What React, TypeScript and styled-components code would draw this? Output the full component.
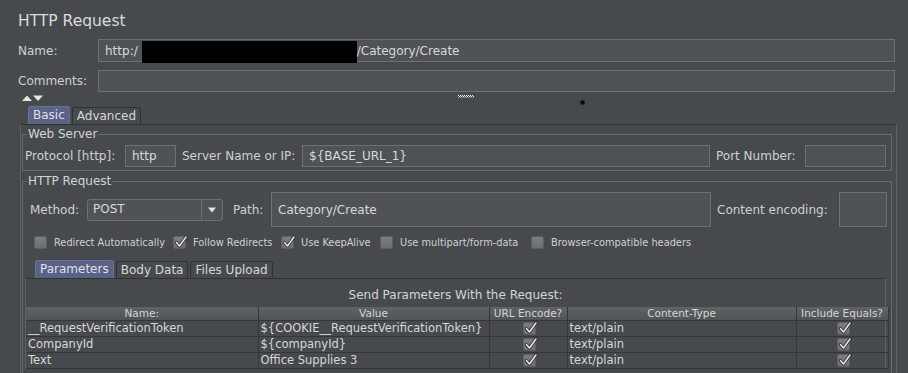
import React from 'react';
import styled, { createGlobalStyle } from 'styled-components';

const GlobalStyle = createGlobalStyle`
  html, body { margin: 0; padding: 0; background: #464a4d; }
  body { font-family: "DejaVu Sans", "Liberation Sans", sans-serif; }
  * { box-sizing: border-box; }
`;

const Page = styled.div`
  width: 908px;
  height: 373px;
  overflow: hidden;
  padding: 11px 11px 0 18px;
  background: #464a4d;
  color: #d3d4d5;
  display: flex;
  flex-direction: column;
`;

const Title = styled.h1`
  margin: 0;
  height: 20px;
  font-size: 15.5px;
  line-height: 20px;
  font-weight: normal;
  color: #dadbdc;
`;

const TopRow = styled.div<{ $top: number; $h: number }>`
  display: flex;
  align-items: center;
  margin-top: ${p => p.$top}px;
  height: ${p => p.$h}px;
`;

const TopLabel = styled.span`
  width: 80px;
  font-size: 12px;
  color: #cfd0d1;
  white-space: nowrap;
`;

const TextBox = styled.div<{ $w?: number; $h?: number }>`
  ${p => (p.$w ? `width: ${p.$w}px; flex: none;` : 'flex: 1;')}
  height: ${p => p.$h ?? 22}px;
  border: 1px solid #6c7072;
  background: #4f5356;
  padding: 0 6px;
  font-size: 12px;
  color: #d8d9da;
  display: flex;
  align-items: center;
  white-space: nowrap;
  overflow: hidden;
`;

const WideBox = styled(TextBox)`
  margin-right: 2px;
  overflow: visible;
`;

const Redacted = styled.span`
  display: inline-block;
  width: 215px;
  height: 22px;
  margin: 2px 0 0 4px;
  background: #000;
`;

const SplitRow = styled.div`
  display: flex;
  align-items: flex-start;
  height: 14px;
`;

const Mark = styled.div<{ $left: number; $top: number }>`
  margin-left: ${p => p.$left}px;
  margin-top: ${p => p.$top}px;
  display: flex;
`;

const TabStrip = styled.div<{ $left: number }>`
  display: flex;
  align-items: flex-end;
  gap: 2px;
  height: 18px;
  margin-left: ${p => p.$left}px;
`;

const Tab = styled.div<{ $active?: boolean }>`
  height: ${p => (p.$active ? 18 : 17)}px;
  padding: 0 4px;
  font-size: 12px;
  line-height: ${p => (p.$active ? 16 : 17)}px;
  border: 1px solid ${p => (p.$active ? '#6a7296' : '#2f3234')};
  border-bottom: none;
  border-radius: 3px 3px 0 0;
  background: ${p => (p.$active ? '#5a6286' : '#484b4e')};
  color: ${p => (p.$active ? '#dfe1ea' : '#d6d7d8')};
  white-space: nowrap;
`;

const OuterPanel = styled.div`
  flex: 1;
  margin-left: 2px;
  border: 1px solid #5e6265;
  border-top-color: #2f3234;
  border-bottom: none;
  padding: 0 4px 0 1px;
  display: flex;
  flex-direction: column;
`;

const Group = styled.fieldset<{ $top: number }>`
  margin: ${p => p.$top}px 0 0 0;
  padding: 4px 5px 3px 2px;
  border: 1px solid #65696c;
  min-width: 0;
`;

const GroupTall = styled(Group)`
  flex: 1;
  border-bottom: none;
  padding-right: 4px;
`;

const Legend = styled.legend`
  margin-left: 2px;
  padding: 0 1px;
  font-size: 12px;
  line-height: 14px;
  color: #d3d4d5;
`;

const FieldRow = styled.div<{ $h: number; $left?: number }>`
  display: flex;
  align-items: center;
  height: ${p => p.$h}px;
  margin-left: ${p => p.$left ?? 0}px;
`;

const FieldLabel = styled.span<{ $w: number; $left?: number }>`
  width: ${p => p.$w}px;
  flex: none;
  margin-left: ${p => p.$left ?? 0}px;
  font-size: 12px;
  color: #cfd0d1;
  white-space: nowrap;
`;

const Select = styled.div`
  width: 136px;
  height: 22px;
  flex: none;
  display: flex;
  border: 1px solid #6c7072;
  border-radius: 3px;
  background: #4f5356;
  font-size: 12px;
  color: #d8d9da;
`;

const SelectValue = styled.span`
  flex: 1;
  padding-left: 5px;
  line-height: 19px;
`;

const SelectArrow = styled.span`
  width: 21px;
  border-left: 1px solid #6c7072;
  display: flex;
  align-items: center;
  justify-content: center;
`;

const CheckRow = styled.div`
  display: flex;
  align-items: center;
  height: 14px;
  margin: 8px 0 0 9px;
`;

const CheckItem = styled.label<{ $w?: number }>`
  display: flex;
  align-items: center;
  ${p => (p.$w ? `width: ${p.$w}px;` : '')}
  flex: none;
  font-size: 9.8px;
  color: #cfd0d1;
  white-space: nowrap;
`;

const Box = styled.span`
  position: relative;
  width: 13px;
  height: 13px;
  flex: none;
  margin-right: 7px;
  border: 1px solid #5c5f62;
  border-radius: 2px;
  background: linear-gradient(#7b7e80, #6c6f71);
  display: inline-block;
`;

const Tick = styled.svg`
  position: absolute;
  left: -1px;
  top: -3px;
`;

const ParamTabs = styled(TabStrip)`
  margin-top: 11px;
`;

const ParamPanel = styled.div`
  flex: 1;
  border: 1px solid #5e6265;
  border-top-color: #2f3234;
  border-bottom: none;
  margin-right: 1px;
`;

const Caption = styled.div`
  height: 28px;
  padding-top: 9px;
  font-size: 12px;
  line-height: 14px;
  text-align: center;
  color: #d3d4d5;
`;

const Table = styled.table`
  border-collapse: collapse;
  table-layout: fixed;
  width: 862px;
`;

const Head = styled.th<{ $w: number }>`
  width: ${p => p.$w}px;
  height: 13px;
  padding: 0;
  font-size: 10.5px;
  line-height: 12px;
  font-weight: normal;
  color: #d4d5d6;
  background: linear-gradient(#606366, #515457);
  border-right: 1px solid #34373a;
  border-bottom: 1px solid #34373a;
  white-space: nowrap;
  overflow: hidden;
`;

const Cell = styled.td<{ $center?: boolean }>`
  height: 16px;
  padding: 0 0 0 2px;
  font-size: 11.5px;
  line-height: 15px;
  color: #d6d7d8;
  border-right: 1px solid #34373a;
  border-bottom: 1px solid #34373a;
  text-align: ${p => (p.$center ? 'center' : 'left')};
  white-space: nowrap;
  overflow: hidden;
  vertical-align: middle;
`;

const CellBox = styled(Box)`
  margin: 1px 0 0;
  vertical-align: top;
`;

const TickMark = () => (
  <Tick width="16" height="16" viewBox="0 0 16 16">
    <path d="M3.5 8.5 L6.5 12 L13 3" fill="none" stroke="#2c2e30" strokeWidth="3" strokeLinecap="round" strokeLinejoin="round" />
    <path d="M3.5 8.5 L6.5 12 L13 3" fill="none" stroke="#eeeeee" strokeWidth="1.4" strokeLinecap="round" strokeLinejoin="round" />
  </Tick>
);

const Check = ({ label, checked, w }: { label: string; checked?: boolean; w?: number }) => (
  <CheckItem $w={w}>
    <Box>{checked && <TickMark />}</Box>
    {label}
  </CheckItem>
);

const params = [
  { name: '__RequestVerificationToken', value: '${COOKIE__RequestVerificationToken}' },
  { name: 'CompanyId', value: '${companyId}' },
  { name: 'Text', value: 'Office Supplies 3' },
];

export default function App() {
  return (
    <>
      <GlobalStyle />
      <Page>
        <Title>HTTP Request</Title>
        <TopRow $top={8} $h={23}>
          <TopLabel>Name:</TopLabel>
          <WideBox $h={23}>
            http:/
            <Redacted />
            /Category/Create
          </WideBox>
        </TopRow>
        <TopRow $top={8} $h={22}>
          <TopLabel>Comments:</TopLabel>
          <WideBox />
        </TopRow>
        <SplitRow>
          <Mark $left={4} $top={3}>
            <svg width="22" height="7" viewBox="0 0 22 7">
              <path d="M0 6 L5 0.5 L10 6 Z" fill="#e6e6e6" />
              <path d="M11 0.5 L21 0.5 L16 6 Z" fill="#e6e6e6" />
            </svg>
          </Mark>
          <Mark $left={414} $top={3}>
            <svg width="16" height="4" viewBox="0 0 16 4">
              {Array.from({ length: 8 }).map((_, i) => (
                <React.Fragment key={i}>
                  <rect x={i * 2} y={0} width="1" height="1" fill="#f0f0f0" />
                  <rect x={i * 2 + 1} y={1} width="1" height="1" fill="#f0f0f0" />
                  <rect x={i * 2} y={2} width="1" height="1" fill="#9a9a9a" />
                </React.Fragment>
              ))}
            </svg>
          </Mark>
          <Mark $left={106} $top={8}>
            <svg width="5" height="5" viewBox="0 0 5 5">
              <circle cx="2.5" cy="2.5" r="2.3" fill="#0a0a0a" />
            </svg>
          </Mark>
        </SplitRow>
        <TabStrip $left={10}>
          <Tab $active>Basic</Tab>
          <Tab>Advanced</Tab>
        </TabStrip>
        <OuterPanel>
          <Group $top={2}>
            <Legend>Web Server</Legend>
            <FieldRow $h={22}>
              <FieldLabel $w={100}>Protocol [http]:</FieldLabel>
              <TextBox $w={51}>http</TextBox>
              <FieldLabel $w={120} $left={6}>Server Name or IP:</FieldLabel>
              <TextBox>{'${BASE_URL_1}'}</TextBox>
              <FieldLabel $w={89} $left={6}>Port Number:</FieldLabel>
              <TextBox $w={81} />
            </FieldRow>
          </Group>
          <GroupTall $top={3}>
            <Legend>HTTP Request</Legend>
            <FieldRow $h={35} $left={5}>
              <FieldLabel $w={57}>Method:</FieldLabel>
              <Select>
                <SelectValue>POST</SelectValue>
                <SelectArrow>
                  <svg width="8" height="6" viewBox="0 0 8 6">
                    <path d="M0 0.5 L8 0.5 L4 5.5 Z" fill="#e2e2e2" />
                  </svg>
                </SelectArrow>
              </Select>
              <FieldLabel $w={38} $left={10}>Path:</FieldLabel>
              <TextBox $h={35}>Category/Create</TextBox>
              <FieldLabel $w={122} $left={6}>Content encoding:</FieldLabel>
              <TextBox $w={48} $h={35} />
            </FieldRow>
            <CheckRow>
              <Check label="Redirect Automatically" w={139} />
              <Check label="Follow Redirects" checked w={108} />
              <Check label="Use KeepAlive" checked w={99} />
              <Check label="Use multipart/form-data" w={151} />
              <Check label="Browser-compatible headers" />
            </CheckRow>
            <ParamTabs $left={10}>
              <Tab $active>Parameters</Tab>
              <Tab>Body Data</Tab>
              <Tab>Files Upload</Tab>
            </ParamTabs>
            <ParamPanel>
              <Caption>Send Parameters With the Request:</Caption>
              <Table>
                <thead>
                  <tr>
                    <Head $w={232}>Name:</Head>
                    <Head $w={231}>Value</Head>
                    <Head $w={78}>URL Encode?</Head>
                    <Head $w={229}>Content-Type</Head>
                    <Head $w={92}>Include Equals?</Head>
                  </tr>
                </thead>
                <tbody>
                  {params.map(p => (
                    <tr key={p.name}>
                      <Cell>{p.name}</Cell>
                      <Cell>{p.value}</Cell>
                      <Cell $center>
                        <CellBox>
                          <TickMark />
                        </CellBox>
                      </Cell>
                      <Cell>text/plain</Cell>
                      <Cell $center>
                        <CellBox>
                          <TickMark />
                        </CellBox>
                      </Cell>
                    </tr>
                  ))}
                </tbody>
              </Table>
            </ParamPanel>
          </GroupTall>
        </OuterPanel>
      </Page>
    </>
  );
}
